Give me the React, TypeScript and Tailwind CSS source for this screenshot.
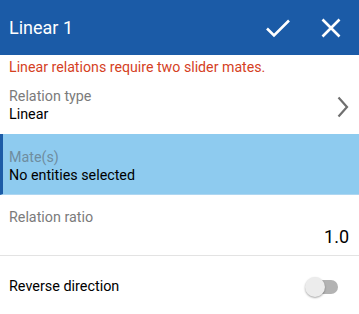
import React from "react";

export default function App() {
  return (
    <div className="w-[359px] h-[314px] bg-white overflow-hidden" style={{ fontFamily: "Roboto, 'Noto Sans', sans-serif" }}>
      <div className="h-[55px] bg-[#1b5ba7] flex items-center pl-[9px] pr-[18px]">
        <div className="flex-1 text-white text-[18px] leading-none">Linear 1</div>
        <svg width="26" height="20" viewBox="0 0 26 20" className="mr-[30px]">
          <path d="M2 10.5 L9 17.5 L24 2.5" stroke="white" strokeWidth="2.6" fill="none" />
        </svg>
        <svg width="20" height="20" viewBox="0 0 20 20">
          <path d="M1.5 1.5 L18.5 18.5 M18.5 1.5 L1.5 18.5" stroke="white" strokeWidth="2.6" fill="none" />
        </svg>
      </div>
      <div className="px-[9px] pt-[3px] h-[25px] text-[14.2px] text-[#d5411f] leading-[18px]">Linear relations require two slider mates.</div>
      <div className="h-[54px] flex items-center pl-[9px] pr-[10px]">
        <div className="flex-1 -mt-[4px]">
          <div className="text-[14.3px] text-[#7b7b7b] leading-[18px]">Relation type</div>
          <div className="text-[14.3px] text-black leading-[18px]">Linear</div>
        </div>
        <svg width="12" height="22" viewBox="0 0 12 22">
          <path d="M1.5 1.5 L10 11 L1.5 20.5" stroke="#6f6f6f" strokeWidth="2.2" fill="none" />
        </svg>
      </div>
      <div className="h-[61px] bg-[#8ecbef] border-l-[3px] border-[#1b5ba7] border-b border-b-[#aed6f1] flex flex-col justify-center pl-[6px] pt-[3px]">
        <div className="text-[14.3px] text-[#6f8d9f] leading-[18px]">Mate(s)</div>
        <div className="text-[14.3px] text-black leading-[18px]">No entities selected</div>
      </div>
      <div className="h-[61px] border-b border-[#e3e3e3] pl-[9px] pr-[10px] pt-[13px]">
        <div className="text-[14.3px] text-[#7b7b7b] leading-[18px]">Relation ratio</div>
        <div className="text-right text-[18px] text-black leading-[22px] mt-[0px]">1.0</div>
      </div>
      <div className="h-[60px] flex items-center pl-[9px] pr-[20px] pt-[2px]">
        <div className="flex-1 text-[14.4px] text-black">Reverse direction</div>
        <div className="relative w-[34px] h-[20px]">
          <div className="absolute left-[6px] top-[3px] w-[27px] h-[14px] rounded-full bg-[#b3b3b3]" />
          <div className="absolute left-0 top-0 w-[20px] h-[20px] rounded-full bg-[#ececec] shadow-[0_1px_2px_rgba(0,0,0,0.35)]" />
        </div>
      </div>
    </div>
  );
}
